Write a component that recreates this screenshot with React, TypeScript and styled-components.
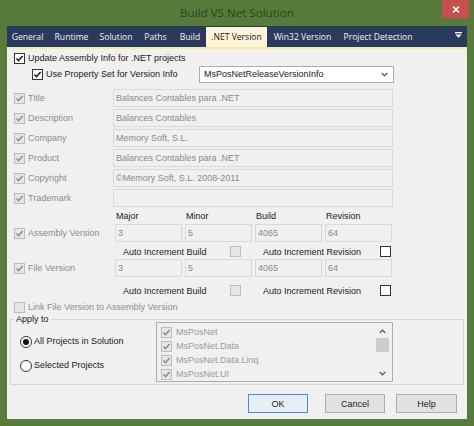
import React from "react";
import styled, { createGlobalStyle } from "styled-components";

const FONT = `"Liberation Sans", Arial, sans-serif`;
const UI_FONT = `"Open Sans", "Liberation Sans", Arial, sans-serif`;

const GlobalStyle = createGlobalStyle`
  html, body { margin: 0; padding: 0; background: #587a3b; }
  body { font-family: ${FONT}; font-size: 9px; color: #1a1a1a; }
  * { box-sizing: border-box; }
`;

const Window = styled.div`
  width: 474px;
  height: 426px;
  background: #587a3b;
  display: flex;
  flex-direction: column;
  padding: 0 7px 7px 7px;
  overflow: hidden;
`;

const TitleBar = styled.div`
  height: 26px;
  flex-shrink: 0;
  display: grid;
  grid-template-columns: 25px 1fr 27px;
  margin-right: -2px;
`;

const Title = styled.div`
  grid-column: 2;
  align-self: center;
  text-align: center;
  font-family: ${UI_FONT};
  font-size: 11.6px;
  color: #2c4420;
  line-height: 14px;
`;

const CloseButton = styled.div`
  grid-column: 3;
  height: 18px;
  background: #c7504c;
  display: flex;
  align-items: center;
  justify-content: center;
`;

const TabStrip = styled.div`
  height: 21px;
  flex-shrink: 0;
  background: #2a3a5c;
  display: flex;
  align-items: flex-end;
`;

const Tab = styled.div<{ $w: number; $active?: boolean }>`
  width: ${(p) => p.$w}px;
  height: ${(p) => (p.$active ? 20 : 21)}px;
  display: flex;
  align-items: center;
  justify-content: center;
  font-family: ${UI_FONT};
  font-size: 8.6px;
  white-space: nowrap;
  color: ${(p) => (p.$active ? "#151515" : "#f0f2f6")};
  background: ${(p) => (p.$active ? "#fdf4da" : "transparent")};
  padding-top: ${(p) => (p.$active ? 0 : 1)}px;
`;

const Overflow = styled.div`
  margin-left: auto;
  margin-right: 5px;
  align-self: flex-start;
  margin-top: 6px;
  display: flex;
`;

const YellowRule = styled.div`
  height: 2px;
  flex-shrink: 0;
  background: #f7e7a8;
`;

const Panel = styled.div`
  flex: 1;
  background: #f0f0f0;
  display: flex;
  flex-direction: column;
  padding: 3px 3px 6px 3px;
`;

const Form = styled.div`
  display: flex;
  flex-direction: column;
  padding-left: 4px;
`;

const Row = styled.div<{ $h: number; $mt?: number; $indent?: number }>`
  display: flex;
  align-items: center;
  height: ${(p) => p.$h}px;
  margin-top: ${(p) => p.$mt ?? 0}px;
  padding-left: ${(p) => p.$indent ?? 0}px;
  flex-shrink: 0;
`;

const LabelCell = styled.div<{ $w: number }>`
  width: ${(p) => p.$w}px;
  display: flex;
  align-items: center;
  gap: 3px;
  flex-shrink: 0;
`;

const Text = styled.span<{ $disabled?: boolean }>`
  color: ${(p) => (p.$disabled ? "#8c8c8c" : "#1a1a1a")};
  white-space: nowrap;
  line-height: 11px;
`;

const BoxShell = styled.span<{ $disabled?: boolean }>`
  width: 11px;
  height: 11px;
  flex-shrink: 0;
  display: inline-flex;
  align-items: center;
  justify-content: center;
  border: 1px solid ${(p) => (p.$disabled ? "#bcbcbc" : "#333333")};
  background: ${(p) => (p.$disabled ? "#e6e6e6" : "#ffffff")};
  svg {
    display: block;
  }
`;

function CheckBox({ checked, disabled }: { checked?: boolean; disabled?: boolean }) {
  return (
    <BoxShell $disabled={disabled}>
      {checked && (
        <svg width="9" height="9" viewBox="0 0 9 9">
          <path
            d="M1.5 4.5 L3.5 6.7 L7.6 1.9"
            fill="none"
            stroke={disabled ? "#8a8a8a" : "#111111"}
            strokeWidth="1.5"
          />
        </svg>
      )}
    </BoxShell>
  );
}

const RadioShell = styled.span`
  width: 12px;
  height: 12px;
  border-radius: 50%;
  border: 1px solid #333333;
  background: #ffffff;
  display: inline-flex;
  align-items: center;
  justify-content: center;
  flex-shrink: 0;
`;

const RadioDot = styled.span`
  width: 6px;
  height: 6px;
  border-radius: 50%;
  background: #111111;
`;

const Select = styled.div`
  width: 195px;
  height: 17px;
  background: #ffffff;
  border: 1px solid #acacac;
  display: flex;
  align-items: center;
  justify-content: space-between;
  padding: 0 5px 0 4px;
`;

const Field = styled.div<{ $w: number; $mr?: number }>`
  width: ${(p) => p.$w}px;
  height: 18px;
  margin-right: ${(p) => p.$mr ?? 0}px;
  flex-shrink: 0;
  border: 1px solid #d9d9d9;
  background: #f0f0f0;
  color: #8a8a8a;
  display: flex;
  align-items: center;
  padding-left: 2px;
  white-space: nowrap;
  overflow: hidden;
`;

const HeaderCell = styled.div`
  width: 70px;
  padding-left: 1px;
  color: #1a1a1a;
  flex-shrink: 0;
`;

const AutoText = styled.span<{ $w: number; $ml?: number }>`
  width: ${(p) => p.$w}px;
  margin-left: ${(p) => p.$ml ?? 0}px;
  color: #1a1a1a;
  white-space: nowrap;
  flex-shrink: 0;
`;

const Group = styled.fieldset`
  margin: 2px 0 0 0;
  padding: 0 0 2px 0;
  border: 1px solid #d6d6d6;
  display: flex;
  min-width: 0;
`;

const Legend = styled.legend`
  margin-left: 3px;
  padding: 0 2px;
  height: 6px;
  line-height: 6px;
  color: #1a1a1a;
  font-size: 9px;
`;

const GroupBody = styled.div`
  display: flex;
  width: 100%;
  padding-top: 0;
`;

const RadioColumn = styled.div`
  width: 145px;
  display: flex;
  flex-direction: column;
  padding-left: 9px;
  flex-shrink: 0;
`;

const RadioRow = styled.div<{ $mt: number }>`
  display: flex;
  align-items: center;
  gap: 2px;
  height: 13px;
  margin-top: ${(p) => p.$mt}px;
`;

const ListBox = styled.div`
  width: 237px;
  height: 60px;
  border: 1px solid #adadad;
  background: #f0f0f0;
  display: flex;
  flex-shrink: 0;
`;

const ListItems = styled.div`
  flex: 1;
  display: flex;
  flex-direction: column;
  padding: 2px 0 0 4px;
  overflow: hidden;
`;

const ListItem = styled.div`
  height: 14px;
  display: flex;
  align-items: center;
  gap: 4px;
  color: #9a9a9a;
  white-space: nowrap;
`;

const ScrollBar = styled.div`
  width: 13px;
  margin: 2px 3px 2px 0;
  display: flex;
  flex-direction: column;
`;

const ScrollArrow = styled.div`
  height: 12px;
  display: flex;
  align-items: center;
  justify-content: center;
`;

const ScrollThumb = styled.div`
  height: 14px;
  margin-top: 1px;
  background: #cdcdcd;
`;

const ScrollSpace = styled.div`
  flex: 1;
`;

const ButtonRow = styled.div`
  display: flex;
  justify-content: flex-end;
  margin-top: 9px;
  padding-right: 7px;
`;

const Button = styled.div<{ $w: number; $mr?: number; $default?: boolean }>`
  width: ${(p) => p.$w}px;
  height: 19px;
  margin-right: ${(p) => p.$mr ?? 0}px;
  display: flex;
  align-items: center;
  justify-content: center;
  border: 1px solid ${(p) => (p.$default ? "#4a90d0" : "#adadad")};
  background: ${(p) => (p.$default ? "#e6eef6" : "#e1e1e1")};
  color: #1a1a1a;
  font-size: 9px;
`;

const tabs: { label: string; w: number; active?: boolean }[] = [
  { label: "General", w: 41 },
  { label: "Runtime", w: 47 },
  { label: "Solution", w: 42 },
  { label: "Paths", w: 37 },
  { label: "Build", w: 32 },
  { label: ".NET Version", w: 61, active: true },
  { label: "Win32 Version", w: 71 },
  { label: "Project Detection", w: 80 },
];

const infoRows = [
  { label: "Title", value: "Balances Contables para .NET" },
  { label: "Description", value: "Balances Contables" },
  { label: "Company", value: "Memory Soft, S.L." },
  { label: "Product", value: "Balances Contables para .NET" },
  { label: "Copyright", value: "©Memory Soft, S.L. 2008-2011" },
  { label: "Trademark", value: "" },
];

const projects = ["MsPosNet", "MsPosNet.Data", "MsPosNet.Data.Linq", "MsPosNet.UI"];

function Chevron({ up }: { up?: boolean }) {
  return (
    <svg width="7" height="5" viewBox="0 0 7 5">
      <path
        d={up ? "M0.8 4 L3.5 1.2 L6.2 4" : "M0.8 1 L3.5 3.8 L6.2 1"}
        fill="none"
        stroke="#555555"
        strokeWidth="1.2"
      />
    </svg>
  );
}

function VersionRow({ label, values, mt }: { label: string; values: string[]; mt: number }) {
  return (
    <Row $h={18} $mt={mt}>
      <LabelCell $w={101}>
        <CheckBox checked disabled />
        <Text $disabled>{label}</Text>
      </LabelCell>
      {values.map((v, i) => (
        <Field key={i} $w={67} $mr={3}>
          {v}
        </Field>
      ))}
    </Row>
  );
}

function AutoRow({ mt }: { mt: number }) {
  return (
    <Row $h={13} $mt={mt} $indent={109}>
      <AutoText $w={107}>Auto Increment Build</AutoText>
      <CheckBox disabled />
      <AutoText $w={117} $ml={22}>
        Auto Increment Revision
      </AutoText>
      <CheckBox />
    </Row>
  );
}

export default function App() {
  return (
    <>
      <GlobalStyle />
      <Window>
        <TitleBar>
          <Title>Build VS.Net Solution</Title>
          <CloseButton>
            <svg width="8" height="7" viewBox="0 0 8 7">
              <path d="M1 0.5 L7 6.5 M7 0.5 L1 6.5" stroke="#ffffff" strokeWidth="1.6" />
            </svg>
          </CloseButton>
        </TitleBar>
        <TabStrip>
          {tabs.map((t) => (
            <Tab key={t.label} $w={t.w} $active={t.active}>
              {t.label}
            </Tab>
          ))}
          <Overflow>
            <svg width="7" height="6" viewBox="0 0 7 6">
              <rect x="0" y="0" width="7" height="1.3" fill="#ffffff" />
              <path d="M0.3 2.4 L6.7 2.4 L3.5 5.8 Z" fill="#ffffff" />
            </svg>
          </Overflow>
        </TabStrip>
        <YellowRule />
        <Panel>
          <Form>
            <Row $h={13}>
              <LabelCell $w={200}>
                <CheckBox checked />
                <Text>Update Assembly Info for .NET projects</Text>
              </LabelCell>
            </Row>
            <Row $h={17} $mt={1} $indent={18}>
              <LabelCell $w={167}>
                <CheckBox checked />
                <Text>Use Property Set for Version Info</Text>
              </LabelCell>
              <Select>
                <Text>MsPosNetReleaseVersionInfo</Text>
                <Chevron />
              </Select>
            </Row>
            {infoRows.map((r, i) => (
              <Row key={r.label} $h={18} $mt={i === 0 ? 6 : 2}>
                <LabelCell $w={99}>
                  <CheckBox checked disabled />
                  <Text $disabled>{r.label}</Text>
                </LabelCell>
                <Field $w={280}>{r.value}</Field>
              </Row>
            ))}
            <Row $h={15} $mt={1} $indent={101}>
              <HeaderCell>Major</HeaderCell>
              <HeaderCell>Minor</HeaderCell>
              <HeaderCell>Build</HeaderCell>
              <HeaderCell>Revision</HeaderCell>
            </Row>
            <VersionRow label="Assembly Version" values={["3", "5", "4065", "64"]} mt={1} />
            <AutoRow mt={3} />
            <VersionRow label="File Version" values={["3", "5", "4065", "64"]} mt={1} />
            <AutoRow mt={7} />
            <Row $h={13} $mt={4}>
              <LabelCell $w={250}>
                <CheckBox disabled />
                <Text $disabled>Link File Version to Assembly Version</Text>
              </LabelCell>
            </Row>
          </Form>
          <Group>
            <Legend>Apply to</Legend>
            <GroupBody>
              <RadioColumn>
                <RadioRow $mt={13}>
                  <RadioShell>
                    <RadioDot />
                  </RadioShell>
                  <Text>All Projects in Solution</Text>
                </RadioRow>
                <RadioRow $mt={11}>
                  <RadioShell />
                  <Text>Selected Projects</Text>
                </RadioRow>
              </RadioColumn>
              <ListBox>
                <ListItems>
                  {projects.map((p) => (
                    <ListItem key={p}>
                      <CheckBox checked disabled />
                      <span>{p}</span>
                    </ListItem>
                  ))}
                </ListItems>
                <ScrollBar>
                  <ScrollArrow>
                    <Chevron up />
                  </ScrollArrow>
                  <ScrollThumb />
                  <ScrollSpace />
                  <ScrollArrow>
                    <Chevron />
                  </ScrollArrow>
                </ScrollBar>
              </ListBox>
            </GroupBody>
          </Group>
          <ButtonRow>
            <Button $w={60} $mr={17} $default>
              OK
            </Button>
            <Button $w={60} $mr={11}>
              Cancel
            </Button>
            <Button $w={61}>Help</Button>
          </ButtonRow>
        </Panel>
      </Window>
    </>
  );
}
